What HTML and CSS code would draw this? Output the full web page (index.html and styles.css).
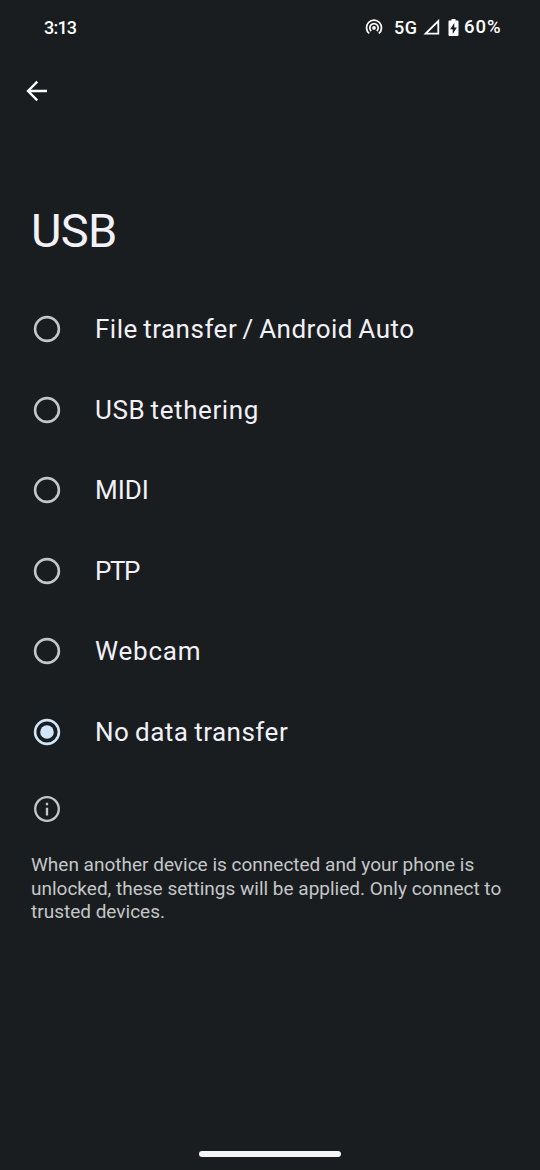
FILE: index.html
```html
<!DOCTYPE html>
<html lang="en">
<head>
<meta charset="utf-8">
<title>USB</title>
<link rel="stylesheet" href="styles.css">
</head>
<body>
<div class="screen">
  <header class="status">
    <span class="clock">3:13</span>
    <div class="indicators">
      <svg class="hotspot" viewBox="0 0 18 18" fill="none" stroke="currentColor" stroke-width="1.7"><path d="M4.2 15.4A7.5 7.5 0 1 1 13.8 15.4M6.2 13A4.2 4.2 0 1 1 11.8 13"/><circle cx="9" cy="9.9" r="1.9" fill="currentColor" stroke="none"/></svg>
      <span class="network">5G</span>
      <svg class="signal" viewBox="0 0 16 16" fill="none" stroke="currentColor" stroke-width="1.8"><path d="M2.1 14.6H14.8V2Z"/></svg>
      <svg class="battery" viewBox="0 0 10 17"><path fill="currentColor" fill-rule="evenodd" d="M3 0H7V1.6H9Q10 1.6 10 2.6V16Q10 17 9 17H1Q0 17 0 16V2.6Q0 1.6 1 1.6H3ZM5.8 4L1.6 10.2H4.2V15L8.4 8.6H5.8Z"/></svg>
      <span class="percent">60%</span>
    </div>
  </header>
  <nav class="toolbar">
    <svg class="back" viewBox="0 0 22 22" fill="none" stroke="currentColor" stroke-width="2.3"><path d="M21 11H2M11.3 1.6L2 11L11.3 20.4"/></svg>
  </nav>
  <h1 class="title">USB</h1>
  <ul class="options">
    <li class="option"><svg class="radio" viewBox="0 0 26 26"><circle class="ring" cx="13" cy="13" r="11.9"/></svg><span class="label file">File transfer / Android Auto</span></li>
    <li class="option"><svg class="radio" viewBox="0 0 26 26"><circle class="ring" cx="13" cy="13" r="11.9"/></svg><span class="label tether">USB tethering</span></li>
    <li class="option"><svg class="radio" viewBox="0 0 26 26"><circle class="ring" cx="13" cy="13" r="11.9"/></svg><span class="label">MIDI</span></li>
    <li class="option"><svg class="radio" viewBox="0 0 26 26"><circle class="ring" cx="13" cy="13" r="11.9"/></svg><span class="label ptp">PTP</span></li>
    <li class="option"><svg class="radio" viewBox="0 0 26 26"><circle class="ring" cx="13" cy="13" r="11.9"/></svg><span class="label webcam">Webcam</span></li>
    <li class="option"><svg class="radio checked" viewBox="0 0 26 26"><circle class="ring" cx="13" cy="13" r="11.9"/><circle class="dot" cx="13" cy="13" r="6.8"/></svg><span class="label none">No data transfer</span></li>
  </ul>
  <footer class="note">
    <svg class="info" viewBox="0 0 26 26" fill="none" stroke="currentColor" stroke-width="2.3"><circle cx="13" cy="13" r="11.8"/><path d="M13 11.8V19.4M13 6.8V9.2"/></svg>
    <p class="summary"><span class="line">When another device is connected and your phone is</span> <span class="line">unlocked, these settings will be applied. Only connect to</span> <span class="line">trusted devices.</span></p>
  </footer>
  <div class="handle"></div>
</div>
</body>
</html>
```
FILE: styles.css
```css
* { box-sizing: border-box; margin: 0; padding: 0; }
body { background: #1a1d1f; font-family: Roboto, "Noto Sans", sans-serif; color: #f1f1f7; }
svg { display: block; flex: none; }
.screen { width: 540px; height: 1170px; display: flex; flex-direction: column; overflow: hidden; background: #1a1d1f; }
.status { height: 54px; padding: 0 38px 0 44px; display: flex; justify-content: space-between; align-items: center; font-size: 18px; font-weight: 500; color: #fff; }
.clock { letter-spacing: -0.8px; }
.indicators { display: flex; align-items: center; }
.hotspot { width: 18px; height: 18px; margin-right: 11px; }
.network { width: 24px; letter-spacing: 0.6px; }
.signal { width: 17px; height: 16px; margin: 0 8px 0 5px; }
.battery { width: 11px; height: 17px; margin-right: 5px; }
.percent { width: 38px; font-size: 18.5px; letter-spacing: 1px; white-space: nowrap; }
.toolbar { height: 74px; padding: 26px 26px 0; color: #fff; }
.back { width: 22px; height: 22px; }
.title { margin-top: 75px; padding-left: 31px; height: 56px; line-height: 56px; font-size: 47px; font-weight: 400; letter-spacing: -0.7px; }
.options { list-style: none; margin-top: 30px; }
.option { height: 80.5px; padding-left: 34px; display: flex; align-items: center; }
.radio { width: 26px; height: 26px; margin-right: 35px; overflow: visible; }
.ring { fill: none; stroke: #c4c7c9; stroke-width: 2.6; }
.checked .ring { stroke: #cfe6fb; }
.dot { fill: #cfe6fb; }
.label { font-size: 26px; line-height: 32px; white-space: nowrap; }
.file { letter-spacing: 0.5px; word-spacing: -1.6px; }
.tether { letter-spacing: 0.6px; word-spacing: -1.8px; }
.ptp { letter-spacing: -1.5px; }
.webcam { letter-spacing: 0.8px; }
.none { letter-spacing: 0.5px; word-spacing: -1.3px; }
.note { padding: 24px 31px 0; color: #c4c7c9; }
.info { width: 26px; height: 26px; margin-left: 3px; }
.summary { margin-top: 31px; font-size: 19px; line-height: 23.5px; }
.line { display: block; white-space: nowrap; }
.handle { width: 142px; height: 6px; border-radius: 3px; background: #f5f5f7; margin: auto auto 13px 199px; }
```
